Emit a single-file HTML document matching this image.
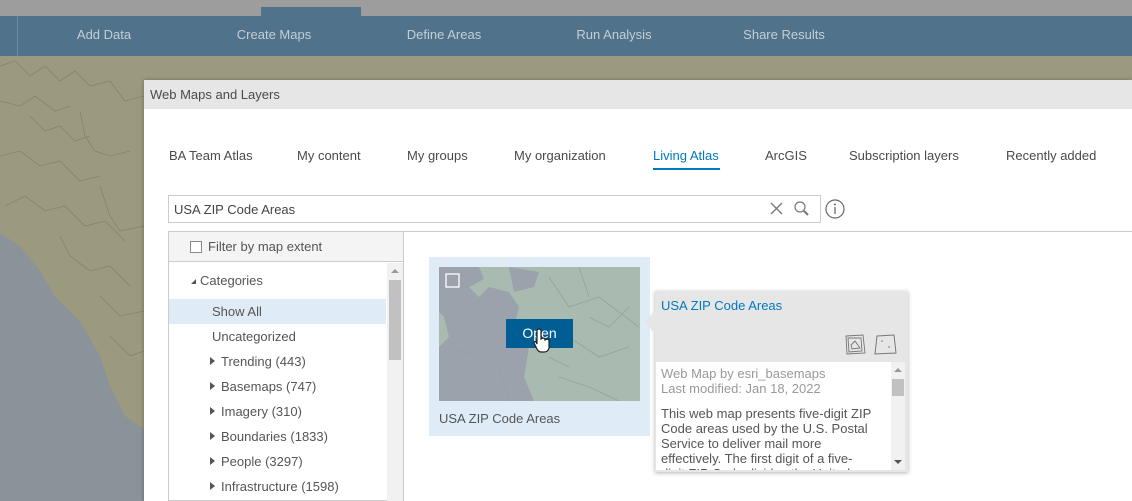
<!DOCTYPE html>
<html><head><style>
*{box-sizing:border-box;margin:0;padding:0}
body{width:1132px;height:501px;overflow:hidden;position:relative;font-family:"Liberation Sans",sans-serif;background:#9c9a7e}
.a{position:absolute}
.nav span{position:absolute;top:11px;font-size:13px;color:#c3ced6;transform:translateX(-50%)}
.tabs span{position:absolute;top:148px;font-size:13px;color:#4a4a4a}
.cat{position:absolute;left:212px;font-size:13px;color:#555}
.tri{display:inline-block;width:0;height:0;border-left:5px solid #555;border-top:4px solid transparent;border-bottom:4px solid transparent;margin-right:6px;vertical-align:1px}
</style></head><body>
<svg class="a" style="left:0;top:56px" width="144" height="445">
<polygon points="0,177 20,190 40,215 55,240 80,265 100,300 110,330 125,360 144,373 144,445 0,445" fill="#8a939a"/>
<g fill="none" stroke="#76745f" stroke-width="0.8" opacity="0.6">
<path d="M0,10 L15,5 30,20 45,10 60,25 75,15 90,30 110,25 125,45 144,40 M0,45 L20,50 35,40 55,55 70,50 M30,60 L45,75 60,70 75,85 90,80 M80,55 L85,80 95,95 110,100 130,95 M0,100 L20,95 40,110 60,105 80,125 100,120 M5,150 L25,140 45,155 65,150 85,170 105,165 125,185 M100,130 L110,160 120,175 144,170 M60,180 L70,200 90,215 110,210 130,230 M100,240 L120,260 144,255 M110,280 L130,300 144,295"/>
</g>
</svg>
<div class="a" style="left:0;top:0;width:1132px;height:16px;background:#9d9d9d"></div>
<div class="a" style="left:261px;top:7px;width:100px;height:10px;background:#50738b"></div>
<div class="a nav" style="left:0;top:16px;width:1132px;height:40px;background:#50738b">
<div class="a" style="left:17px;top:0;width:1px;height:40px;background:#6b8aa0"></div>
<span style="left:104px">Add Data</span><span style="left:274px">Create Maps</span><span style="left:444px">Define Areas</span><span style="left:614px">Run Analysis</span><span style="left:784px">Share Results</span>
</div>
<div class="a" style="left:144px;top:80px;width:988px;height:421px;background:#fff;box-shadow:0 0 4px rgba(0,0,0,.3)"></div>
<div class="a" style="left:144px;top:80px;width:988px;height:29px;background:#e6e6e6;font-size:13px;color:#4a4a4a;padding:7px 6px">Web Maps and Layers</div>
<div class="tabs">
<span style="left:169px">BA Team Atlas</span><span style="left:297px">My content</span><span style="left:407px">My groups</span><span style="left:514px">My organization</span><span style="left:653px;color:#0079c1">Living Atlas</span><span style="left:765px">ArcGIS</span><span style="left:849px">Subscription layers</span><span style="left:1006px">Recently added</span>
</div>
<div class="a" style="left:653px;top:168px;width:67px;height:2px;background:#0079c1"></div>
<div class="a" style="left:168px;top:195px;width:653px;height:28px;border:1px solid #ccc;font-size:13px;color:#444;padding:6px 5px">USA ZIP Code Areas</div>
<svg class="a" style="left:768px;top:200px" width="50" height="18"><path d="M3,3 L14,14 M14,3 L3,14" stroke="#777" stroke-width="1.3"/><circle cx="32" cy="7" r="5" fill="none" stroke="#777" stroke-width="1.2"/><path d="M36,11 L40,15" stroke="#777" stroke-width="2"/></svg>
<svg class="a" style="left:824px;top:198px" width="22" height="22"><circle cx="11" cy="11" r="9" fill="none" stroke="#666" stroke-width="1.2"/><circle cx="11" cy="6.5" r="1" fill="#666"/><path d="M11,9 V16" stroke="#666" stroke-width="1.3"/></svg>
<div class="a" style="left:403px;top:231px;width:729px;height:1px;background:#ccc"></div>
<div class="a" style="left:168px;top:231px;width:236px;height:270px;border:1px solid #ccc"></div>
<div class="a" style="left:169px;top:232px;width:234px;height:30px;background:#f4f4f4;border-bottom:1px solid #ccc;font-size:13px;color:#555;padding:7px 0 0 21px"><span style="display:inline-block;width:12px;height:12px;border:1px solid #888;vertical-align:-2px;margin-right:6px;background:#fff"></span>Filter by map extent</div>
<div class="a" style="left:387px;top:263px;width:16px;height:238px;background:#f1f1f1"></div>
<div class="a" style="left:389px;top:280px;width:12px;height:80px;background:#c1c1c1"></div>
<div class="a" style="left:391px;top:269px;border-left:4px solid transparent;border-right:4px solid transparent;border-bottom:4px solid #999"></div>
<div class="cat" style="left:191px;top:273px"><span style="display:inline-block;border-left:5px solid transparent;border-bottom:5px solid #555;margin-right:4px;vertical-align:1px"></span>Categories</div>
<div class="a" style="left:169px;top:299px;width:217px;height:25px;background:#dfecf8"></div>
<div class="cat" style="top:304px">Show All</div>
<div class="cat" style="top:329px">Uncategorized</div>
<div class="cat" style="left:210px;top:354px"><span class="tri"></span>Trending (443)</div>
<div class="cat" style="left:210px;top:379px"><span class="tri"></span>Basemaps (747)</div>
<div class="cat" style="left:210px;top:404px"><span class="tri"></span>Imagery (310)</div>
<div class="cat" style="left:210px;top:429px"><span class="tri"></span>Boundaries (1833)</div>
<div class="cat" style="left:210px;top:454px"><span class="tri"></span>People (3297)</div>
<div class="cat" style="left:210px;top:479px"><span class="tri"></span>Infrastructure (1598)</div>
<div class="a" style="left:429px;top:257px;width:221px;height:179px;background:#dfecf8"></div>
<svg class="a" style="left:439px;top:267px" width="201" height="134"><rect width="201" height="134" fill="#a9bab0"/>
<path d="M0,0 H40 L45,12 30,20 40,30 50,20 70,25 80,40 75,60 90,80 85,110 95,134 0,134 V80 L10,70 5,50 0,45 Z" fill="#9ba2ab"/>
<path d="M70,0 L100,5 95,20 75,25 Z" fill="#9ba2ab"/>
<g fill="none" stroke="#93a49a" stroke-width="0.8"><path d="M110,10 L130,40 160,30 200,60 M130,70 L160,90 190,80 M120,110 L150,120 180,134 M10,80 L40,90 M140,0 L150,30 M110,90 L130,100 M60,100 L70,134 M150,50 L170,60 190,40"/></g>
<rect x="7" y="7" width="13" height="13" fill="none" stroke="#fff" stroke-width="1.3"/></svg>
<div class="a" style="left:506px;top:319px;width:67px;height:29px;background:#005e95;color:#fff;font-size:14px;text-align:center;padding-top:6px">Open</div>
<svg class="a" style="left:532px;top:328px" width="20" height="26"><path d="M5,3 Q5,1 7,1 Q9,1 9,3 V11 L11,10 Q13,10 13,12 L15,11 Q17,11 17,13 V20 Q16,24 12,24 H9 Q6,24 4,19 L2,15 Q2,13 4,14 L5,16 Z" fill="#fff" stroke="#222" stroke-width="1.2"/></svg>
<div class="a" style="left:439px;top:411px;font-size:13px;color:#555">USA ZIP Code Areas</div>
<div class="a" style="left:655px;top:291px;width:253px;height:181px;background:#e6e6e6;box-shadow:0 1px 4px rgba(0,0,0,.3)"></div>
<div class="a" style="left:645px;top:310px;border-top:12px solid transparent;border-bottom:12px solid transparent;border-right:10px solid #e6e6e6"></div>
<div class="a" style="left:661px;top:298px;font-size:13px;color:#0079c1">USA ZIP Code Areas</div>
<svg class="a" style="left:843px;top:333px" width="56" height="24"><path d="M3,3 L20,2 22,20 4,21 Z M5,5 L18,5 19,18 6,19 Z M8,12 L12,8 17,15 9,16 Z" fill="none" stroke="#777" stroke-width="0.9"/><path d="M34,3 L51,2 53,20 32,21 Z" fill="none" stroke="#777" stroke-width="1"/><circle cx="39" cy="8" r=".8" fill="#777"/><circle cx="46" cy="14" r=".8" fill="#777"/></svg>
<div class="a" style="left:656px;top:362px;width:235px;height:108px;background:#fff;overflow:hidden;font-size:13px;color:#555;padding:4px 5px;line-height:15px;white-space:nowrap">
<div style="color:#999">Web Map by esri_basemaps<br>Last modified: Jan 18, 2022</div>
<div style="margin-top:10px">This web map presents five-digit ZIP<br>Code areas used by the U.S. Postal<br>Service to deliver mail more<br>effectively. The first digit of a five-<br>digit ZIP Code divides the United</div>
</div>
<div class="a" style="left:891px;top:362px;width:14px;height:108px;background:#f1f1f1"></div>
<div class="a" style="left:892px;top:379px;width:12px;height:17px;background:#c1c1c1"></div>
<div class="a" style="left:894px;top:368px;border-left:4px solid transparent;border-right:4px solid transparent;border-bottom:4px solid #999"></div>
<div class="a" style="left:894px;top:460px;border-left:4px solid transparent;border-right:4px solid transparent;border-top:4px solid #555"></div>
</body></html>
